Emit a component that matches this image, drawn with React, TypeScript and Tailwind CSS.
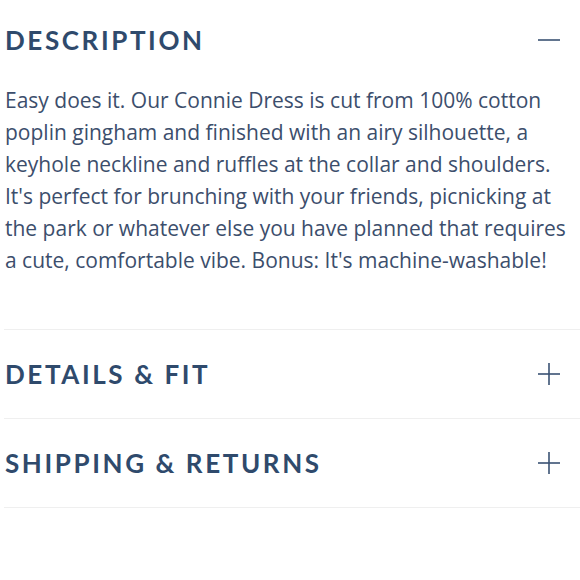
import { useState } from "react";

const sections = [
  {
    title: "DESCRIPTION",
    body: "Easy does it. Our Connie Dress is cut from 100% cotton poplin gingham and finished with an airy silhouette, a keyhole neckline and ruffles at the collar and shoulders. It's perfect for brunching with your friends, picnicking at the park or whatever else you have planned that requires a cute, comfortable vibe. Bonus: It's machine-washable!",
  },
  { title: "DETAILS & FIT", body: "" },
  { title: "SHIPPING & RETURNS", body: "" },
];

function Toggle({ open }: { open: boolean }) {
  return (
    <svg width="24" height="24" viewBox="0 0 24 24" className="text-[#3a5273]">
      <path d="M1 12h22" stroke="currentColor" strokeWidth="1.6" />
      {!open && <path d="M12 1v22" stroke="currentColor" strokeWidth="1.6" />}
    </svg>
  );
}

export default function App() {
  const [openIdx, setOpenIdx] = useState(0);

  return (
    <div className="w-[580px] h-[580px] bg-white pl-[4px] font-['Lato',sans-serif] overflow-hidden">
      {sections.map((s, i) => {
        const open = openIdx === i;
        return (
          <div key={s.title} className="border-b border-[#efefef]">
            <button
              onClick={() => setOpenIdx(open ? -1 : i)}
              className={`w-full flex items-center justify-between pl-[1px] pr-[19px] text-left ${
                i === 0 ? "h-[80px]" : "h-[88px]"
              }`}
            >
              <span className="text-[26px] font-bold tracking-[0.1em] text-[#2f4a6c]">
                {s.title}
              </span>
              <Toggle open={open} />
            </button>
            {open && (
              <p className="pl-[1px] pr-[2px] mt-[4px] pb-[53px] font-['Open_Sans',sans-serif] text-[21px] leading-[32px] text-[#3c4e6c]">
                {s.body}
              </p>
            )}
          </div>
        );
      })}
    </div>
  );
}
